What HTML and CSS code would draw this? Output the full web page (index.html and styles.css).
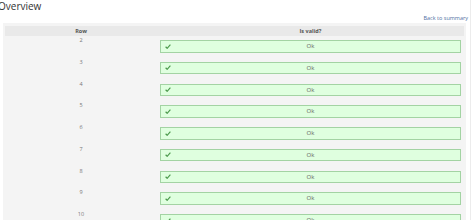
FILE: index.html
```html
<!DOCTYPE html>
<html lang="en">

<head>
    <meta charset="UTF-8">
    <title>Overview</title>
    <link rel="stylesheet" href="styles.css">
</head>

<body>
    <div class="page">
        <h1>Overview</h1>
        <div class="links"><a href="#">Back to summary</a></div>

        <!-- Results table -->
        <div class="results">
            <div class="head">
                <div>Row</div>
                <div>Is valid?</div>
            </div>
            <div class="row"><div class="num">2</div><div class="cell"><div class="ok"><svg viewBox="0 0 10 8"><path d="M1 4.5 L3.6 7 L9 1"/></svg>Ok</div></div></div>
            <div class="row"><div class="num">3</div><div class="cell"><div class="ok"><svg viewBox="0 0 10 8"><path d="M1 4.5 L3.6 7 L9 1"/></svg>Ok</div></div></div>
            <div class="row"><div class="num">4</div><div class="cell"><div class="ok"><svg viewBox="0 0 10 8"><path d="M1 4.5 L3.6 7 L9 1"/></svg>Ok</div></div></div>
            <div class="row"><div class="num">5</div><div class="cell"><div class="ok"><svg viewBox="0 0 10 8"><path d="M1 4.5 L3.6 7 L9 1"/></svg>Ok</div></div></div>
            <div class="row"><div class="num">6</div><div class="cell"><div class="ok"><svg viewBox="0 0 10 8"><path d="M1 4.5 L3.6 7 L9 1"/></svg>Ok</div></div></div>
            <div class="row"><div class="num">7</div><div class="cell"><div class="ok"><svg viewBox="0 0 10 8"><path d="M1 4.5 L3.6 7 L9 1"/></svg>Ok</div></div></div>
            <div class="row"><div class="num">8</div><div class="cell"><div class="ok"><svg viewBox="0 0 10 8"><path d="M1 4.5 L3.6 7 L9 1"/></svg>Ok</div></div></div>
            <div class="row"><div class="num">9</div><div class="cell"><div class="ok"><svg viewBox="0 0 10 8"><path d="M1 4.5 L3.6 7 L9 1"/></svg>Ok</div></div></div>
            <div class="row"><div class="num">10</div><div class="cell"><div class="ok"><svg viewBox="0 0 10 8"><path d="M1 4.5 L3.6 7 L9 1"/></svg>Ok</div></div></div>
        </div>
    </div>
</body>

</html>
```

FILE: styles.css
```css
body {
    font-family: "Open Sans", Arial, sans-serif;
    margin: 0;
    padding: 0;
    background-color: #fff;
    overflow: hidden;
}

.page {
    width: 470px;
    height: 220px;
    border-right: 1px solid #ececec;
}

h1 {
    margin: 0 0 0 -2px;
    font-size: 10px;
    line-height: 12px;
    font-weight: normal;
    color: #333;
}

.links {
    margin-top: 2px;
    padding-right: 2px;
    text-align: right;
    font-size: 5.5px;
    line-height: 8px;
}

.links a {
    color: #4f6f9f;
    text-decoration: none;
}

.results {
    margin: 1px 4px 0 3px;
    padding: 3px 2px 0 2px;
    background-color: #f4f4f4;
    height: 200px;
}

.head {
    display: grid;
    grid-template-columns: 152px 1fr;
    background-color: #e9e9e9;
    height: 10px;
    line-height: 10px;
    font-size: 5.5px;
    font-weight: bold;
    color: #555;
    text-align: center;
}

.row {
    display: grid;
    grid-template-columns: 152px 1fr;
    height: 21.75px;
}

.num {
    text-align: center;
    font-size: 5.5px;
    line-height: 7px;
    padding-top: 1px;
    color: #777;
}

.cell {
    padding: 4px 3px 0 3px;
}

.ok {
    position: relative;
    height: 10.5px;
    line-height: 10.5px;
    background-color: #dfffdf;
    border: 1px solid #a3d3a3;
    text-align: center;
    font-size: 6px;
    color: #666;
}

.ok svg {
    position: absolute;
    left: 4px;
    top: 2.5px;
    width: 6px;
    height: 5px;
    fill: none;
    stroke: #4d9a4d;
    stroke-width: 2;
}
```
